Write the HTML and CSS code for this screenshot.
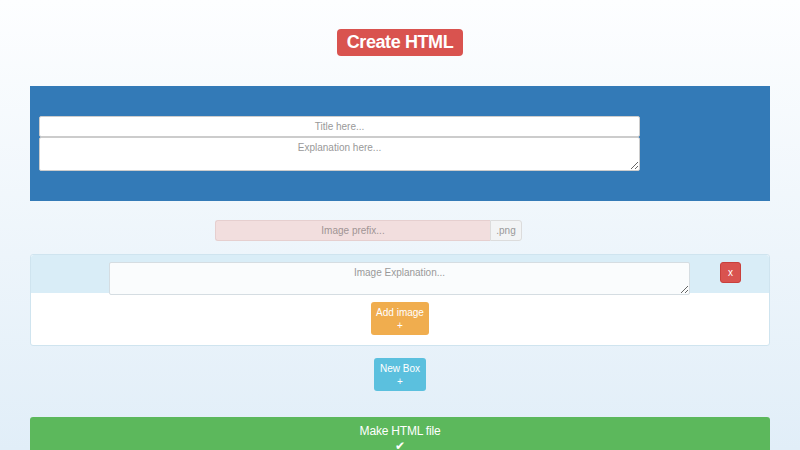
FILE: index.html
```html
<!DOCTYPE html>
<html lang="en">
<head>
    <meta charset="UTF-8">
    <meta name="viewport" content="width=device-width, initial-scale=1.0">
    <link rel="stylesheet" href="styles.css">
</head>
<body>
    <h1 class="title"><span class="label">Create HTML</span></h1>

    <!-- Title and explanation of the page -->
    <div class="jumbo">
        <div class="head-form">
            <input type="text" class="field" placeholder="Title here...">
            <textarea class="field area" placeholder="Explanation here..."></textarea>
        </div>
    </div>

    <div class="prefix-group">
        <input type="text" class="prefix" placeholder="Image prefix...">
        <span class="addon">.png</span>
    </div>

    <!-- One image box -->
    <div class="box">
        <div class="box-head">
            <textarea class="field img-area" placeholder="Image Explanation..."></textarea>
            <button class="btn btn-x">x</button>
        </div>
        <div class="box-body">
            <button class="btn btn-add">Add image<br>+</button>
        </div>
    </div>

    <div class="center">
        <button class="btn btn-new">New Box<br>+</button>
    </div>

    <button class="btn btn-make">Make HTML file<br>&#10004;</button>
</body>
</html>
```

FILE: styles.css
```css
html, body {
    height: 100%;
}
body {
    margin: 0;
    padding: 0 30px;
    font-family: "Liberation Sans", Arial, sans-serif;
    background: linear-gradient(to bottom, #fdfeff 0%, #e1eef8 100%);
    background-attachment: fixed;
    overflow: hidden;
}
.title {
    margin: 0;
    padding-top: 29px;
    text-align: center;
    line-height: 0;
    height: 57px;
}
.label {
    display: inline-block;
    background-color: #d9534f;
    color: #fff;
    font-size: 18px;
    letter-spacing: -0.4px;
    font-weight: bold;
    line-height: 27px;
    height: 27px;
    padding: 0 10px;
    border-radius: 4px;
}
.jumbo {
    background-color: #337ab7;
    padding: 30px 9px;
}
.head-form {
    width: 601px;
    display: flex;
    flex-direction: column;
}
.field {
    box-sizing: border-box;
    display: block;
    width: 100%;
    margin: 0;
    font-family: inherit;
    font-size: 10px;
    text-align: center;
    background: #fff;
    border: 1px solid #ccc;
    border-radius: 2px;
    outline: none;
}
.field::placeholder {
    color: #999;
}
.head-form .field {
    height: 21px;
}
.head-form .area {
    height: 34px;
    padding-top: 4px;
    resize: vertical;
}
.prefix-group {
    display: flex;
    margin: 19px 0 0 185px;
    width: 307px;
    height: 21px;
}
.prefix {
    box-sizing: border-box;
    flex: 1;
    height: 21px;
    border: 1px solid #e6cfcf;
    border-right: none;
    border-radius: 3px 0 0 3px;
    background-color: #f2dede;
    font-family: inherit;
    font-size: 10px;
    text-align: center;
    outline: none;
}
.prefix::placeholder {
    color: #a09494;
}
.addon {
    box-sizing: border-box;
    width: 32px;
    height: 21px;
    line-height: 19px;
    border: 1px solid #dcdcdc;
    border-radius: 0 3px 3px 0;
    background-color: #f2f4f5;
    color: #999;
    font-size: 10px;
    text-align: center;
}
.box {
    margin-top: 13px;
    border: 1px solid #cfe4ef;
    border-radius: 3px;
    background: #fff;
}
.box-head {
    display: flex;
    align-items: flex-start;
    height: 38px;
    background-color: #d9edf7;
    border-radius: 3px 3px 0 0;
}
.img-area {
    width: 581px;
    height: 33px;
    margin: 7px 0 0 78px;
    padding-top: 4px;
    background: #fafcfd;
    border-color: #d5dde2;
    resize: vertical;
    position: relative;
}
.btn {
    border: none;
    border-radius: 3px;
    color: #fff;
    font-family: inherit;
    font-size: 10px;
    line-height: 13px;
    cursor: pointer;
}
.btn-x {
    width: 21px;
    height: 21px;
    margin: 7px 0 0 30px;
    padding: 0;
    background-color: #d9534f;
    border: 1px solid #c9403c;
}
.box-body {
    padding: 9px 0 10px;
    text-align: center;
}
.btn-add {
    width: 58px;
    height: 33px;
    padding: 0;
    background-color: #f0ad4e;
}
.center {
    text-align: center;
    margin-top: 12px;
}
.btn-new {
    width: 52px;
    height: 33px;
    padding: 0;
    background-color: #5bc0de;
}
.btn-make {
    display: block;
    width: 100%;
    margin-top: 26px;
    padding: 7px 0 8px;
    background-color: #5cb85c;
    font-size: 12px;
    letter-spacing: -0.2px;
    line-height: 15px;
}
```
